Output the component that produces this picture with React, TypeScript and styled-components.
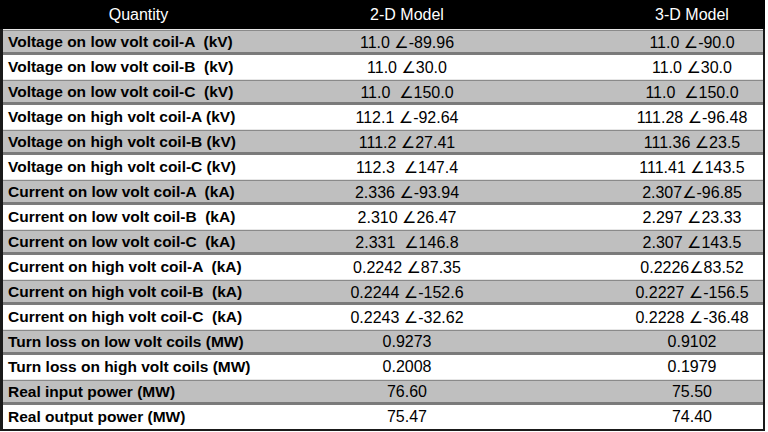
import styled, { createGlobalStyle } from 'styled-components';

const GlobalStyle = createGlobalStyle`
  html, body {
    margin: 0;
    padding: 0;
    background: #ffffff;
  }
  body {
    width: 768px;
    height: 432px;
    overflow: hidden;
    font-family: 'Liberation Sans', Arial, 'DejaVu Sans', sans-serif;
  }
`;

const Table = styled.div`
  width: 765px;
  display: flex;
  flex-direction: column;
  border-left: 3px solid #1a1a1a;
  border-right: 2px solid #1a1a1a;
  border-bottom: 2px solid #1a1a1a;
  box-sizing: border-box;
`;

const Grid = `
  display: grid;
  grid-template-columns: 271px 266px 1fr;
  align-items: center;
`;

const HeaderRow = styled.div`
  ${Grid}
  height: 29px;
  margin-left: -3px;
  padding-left: 3px;
  margin-right: -2px;
  padding-right: 2px;
  background: #000000;
  color: #ffffff;
  font-size: 16px;
`;

const Row = styled.div<{ $shaded: boolean }>`
  ${Grid}
  height: 25px;
  box-sizing: border-box;
  border-top: 1px solid ${(p) => (p.$shaded ? '#e6e6e6' : '#7c7c7c')};
  box-shadow: ${(p) => (p.$shaded ? 'inset 0 1px 0 #8a8a8a, inset 0 -2px 0 #7a7a7a' : 'none')};
  background: ${(p) => (p.$shaded ? '#bfbfbf' : '#ffffff')};
  color: #000000;
  font-size: 16px;
`;

const HeadCell = styled.div<{ $col: number }>`
  text-align: center;
  padding-left: ${(p) => (p.$col === 2 ? '81px' : '0')};
  white-space: pre;
`;

const Label = styled.div`
  padding-left: 5px;
  font-weight: bold;
  font-size: 15.5px;
  white-space: pre;
`;

const Value = styled.div<{ $col: number }>`
  text-align: center;
  padding-left: ${(p) => (p.$col === 2 ? '81px' : '0')};
  white-space: pre;
`;

const rows: [string, string, string][] = [
  ['Voltage on low volt coil-A  (kV)', '11.0 ∠-89.96', '11.0 ∠-90.0'],
  ['Voltage on low volt coil-B  (kV)', '11.0 ∠30.0', '11.0 ∠30.0'],
  ['Voltage on low volt coil-C  (kV)', '11.0  ∠150.0', '11.0  ∠150.0'],
  ['Voltage on high volt coil-A (kV)', '112.1 ∠-92.64', '111.28 ∠-96.48'],
  ['Voltage on high volt coil-B (kV)', '111.2 ∠27.41', '111.36 ∠23.5'],
  ['Voltage on high volt coil-C (kV)', '112.3  ∠147.4', '111.41 ∠143.5'],
  ['Current on low volt coil-A  (kA)', '2.336 ∠-93.94', '2.307∠-96.85'],
  ['Current on low volt coil-B  (kA)', '2.310 ∠26.47', '2.297 ∠23.33'],
  ['Current on low volt coil-C  (kA)', '2.331  ∠146.8', '2.307 ∠143.5'],
  ['Current on high volt coil-A  (kA)', '0.2242 ∠87.35', '0.2226∠83.52'],
  ['Current on high volt coil-B  (kA)', '0.2244 ∠-152.6', '0.2227 ∠-156.5'],
  ['Current on high volt coil-C  (kA)', '0.2243 ∠-32.62', '0.2228 ∠-36.48'],
  ['Turn loss on low volt coils (MW)', '0.9273', '0.9102'],
  ['Turn loss on high volt coils (MW)', '0.2008', '0.1979'],
  ['Real input power (MW)', '76.60', '75.50'],
  ['Real output power (MW)', '75.47', '74.40'],
];

export default function App() {
  return (
    <>
      <GlobalStyle />
      <Table>
        <HeaderRow>
          <HeadCell $col={0}>Quantity</HeadCell>
          <HeadCell $col={1}>2-D Model</HeadCell>
          <HeadCell $col={2}>3-D Model</HeadCell>
        </HeaderRow>
        {rows.map(([label, twoD, threeD], i) => (
          <Row key={label} $shaded={i % 2 === 0}>
            <Label>{label}</Label>
            <Value $col={1}>{twoD}</Value>
            <Value $col={2}>{threeD}</Value>
          </Row>
        ))}
      </Table>
    </>
  );
}
